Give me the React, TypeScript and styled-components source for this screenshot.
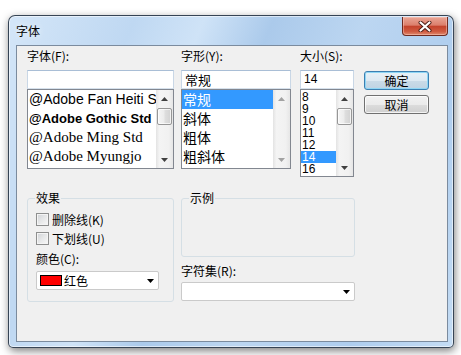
import React from "react";
import styled, { createGlobalStyle, css } from "styled-components";

const GlobalStyle = createGlobalStyle`
  html, body {
    margin: 0;
    padding: 0;
    background: #ffffff;
  }
  body {
    font-family: "Noto Sans CJK SC", "Liberation Sans", sans-serif;
    font-size: 12px;
    color: #000000;
  }
  * {
    box-sizing: border-box;
  }
`;

const Page = styled.div`
  width: 461px;
  height: 355px;
  padding: 15px 0 0 8px;
`;

const Window = styled.div`
  width: 446px;
  height: 333px;
  display: flex;
  flex-direction: column;
  border: 1px solid rgba(40, 52, 68, 0.9);
  border-radius: 7px 7px 5px 5px;
  padding: 0 5px 5px 7px;
  background: linear-gradient(
    112deg,
    #d4e6f8 0%,
    #bfd8f2 22%,
    #cfe3f7 34%,
    #abcaeb 46%,
    #bcd6f1 62%,
    #aecdee 82%,
    #c4dcf4 100%
  );
  box-shadow: inset 0 0 0 1px rgba(255, 255, 255, 0.55),
    1px 3px 9px rgba(0, 0, 0, 0.5);
`;

const TitleBar = styled.div`
  height: 29px;
  flex: none;
  display: flex;
  justify-content: space-between;
  align-items: flex-start;
`;

const Title = styled.div`
  line-height: 29px;
  font-size: 12px;
  text-shadow: 0 0 6px rgba(255, 255, 255, 0.9);
`;

const CloseButton = styled.div`
  width: 46px;
  height: 19px;
  margin-top: 1px;
  display: flex;
  align-items: center;
  justify-content: center;
  border: 1px solid #6e2a20;
  border-top: none;
  border-radius: 0 0 4px 4px;
  background: linear-gradient(
    #e9a696 0%,
    #dc7f6c 45%,
    #c4432c 52%,
    #cf5a40 80%,
    #df8a6e 100%
  );
  box-shadow: inset 0 0 0 1px rgba(255, 210, 200, 0.45);
`;

const Client = styled.div`
  flex: 1;
  background: #f0f0f0;
  border: 1px solid #7b8b9e;
  padding: 2px 0 0 10px;
`;

const Row = styled.div<{ $mt?: number }>`
  display: flex;
  align-items: flex-start;
  margin-top: ${(p) => p.$mt ?? 0}px;
`;

const Column = styled.div<{ $w: number; $ml?: number }>`
  display: flex;
  flex-direction: column;
  width: ${(p) => p.$w}px;
  margin-left: ${(p) => p.$ml ?? 0}px;
`;

const Label = styled.div<{ $mt?: number; $mb?: number }>`
  height: 16px;
  line-height: 16px;
  font-size: 12px;
  white-space: nowrap;
  margin-top: ${(p) => p.$mt ?? 0}px;
  margin-bottom: ${(p) => p.$mb ?? 6}px;
`;

const TextBox = styled.div<{ $latin?: boolean }>`
  height: 19px;
  border: 1px solid;
  border-color: #a9bed6 #c9d7e6 #d6e1ec #c9d7e6;
  background: #ffffff;
  padding: 0 3px;
  font-size: ${(p) => (p.$latin ? 12 : 13)}px;
  font-family: ${(p) =>
    p.$latin
      ? `"Liberation Sans", sans-serif`
      : `"Noto Sans CJK SC", sans-serif`};
  line-height: 17px;
  white-space: nowrap;
`;

const ListBox = styled.div<{ $h: number }>`
  height: ${(p) => p.$h}px;
  border: 1px solid #828790;
  background: #ffffff;
  display: flex;
  overflow: hidden;
`;

const Items = styled.div<{ $pt?: number }>`
  flex: 1;
  min-width: 0;
  overflow: hidden;
  padding-top: ${(p) => p.$pt ?? 0}px;
`;

type FontKind = "sans" | "sansBold" | "serif" | "cjk" | "digits";

const fontFor = (kind: FontKind) => {
  switch (kind) {
    case "sans":
      return css`
        font-family: "Liberation Sans", sans-serif;
        font-size: 14px;
      `;
    case "sansBold":
      return css`
        font-family: "Liberation Sans", sans-serif;
        font-size: 13px;
        font-weight: bold;
      `;
    case "serif":
      return css`
        font-family: "Liberation Serif", serif;
        font-size: 15px;
      `;
    case "cjk":
      return css`
        font-family: "Noto Sans CJK SC", sans-serif;
        font-size: 14px;
      `;
    default:
      return css`
        font-family: "Liberation Sans", sans-serif;
        font-size: 12px;
      `;
  }
};

const Item = styled.div<{ $h: number; $font: FontKind; $selected?: boolean }>`
  height: ${(p) => p.$h}px;
  line-height: ${(p) => p.$h}px;
  padding-left: 1px;
  white-space: nowrap;
  ${(p) => fontFor(p.$font)}
  ${(p) =>
    p.$selected &&
    css`
      background: #3399ff;
      color: #ffffff;
    `}
`;

const ScrollBar = styled.div`
  width: 17px;
  flex: none;
  display: flex;
  flex-direction: column;
  background: linear-gradient(
    to right,
    #e3e3e3 0%,
    #f4f4f4 20%,
    #f1f1f1 75%,
    #e6e6e6 100%
  );
`;

const ScrollButton = styled.div`
  height: 17px;
  flex: none;
  display: flex;
  align-items: center;
  justify-content: center;
`;

const Track = styled.div`
  flex: 1;
`;

const Thumb = styled.div`
  height: 17px;
  margin: 1px 1px 0 1px;
  border: 1px solid #979797;
  border-radius: 2px;
  background: linear-gradient(
    to right,
    #f6f6f6 0%,
    #ececec 45%,
    #dedede 55%,
    #d2d2d2 100%
  );
  box-shadow: inset 0 0 0 1px rgba(255, 255, 255, 0.7);
`;

const PushButton = styled.button<{ $default?: boolean; $mt: number }>`
  height: 19px;
  margin: ${(p) => p.$mt}px 0 0 0;
  padding: 0;
  border: 1px solid #707070;
  border-radius: 3px;
  font-family: "Noto Sans CJK SC", sans-serif;
  font-size: 12px;
  line-height: 17px;
  color: #000000;
  background: linear-gradient(#f2f2f2 0%, #ebebeb 50%, #dddddd 50%, #cfcfcf 100%);
  box-shadow: inset 0 0 0 1px rgba(255, 255, 255, 0.75);
  ${(p) =>
    p.$default &&
    css`
      border-color: #3c7fb1;
      background: linear-gradient(
        #e8f1f7 0%,
        #dde9f2 50%,
        #cadbe8 50%,
        #bfd3e3 100%
      );
      box-shadow: inset 0 0 0 1px #8fd6f5;
    `}
`;

const GroupBox = styled.fieldset<{ $h: number }>`
  height: ${(p) => p.$h}px;
  margin: 0;
  min-width: 0;
  border: 1px solid #d5dfe5;
  border-radius: 3px;
  padding: 8px 0 0 8px;
`;

const GroupTitle = styled.legend`
  padding: 0 1px;
  margin-left: -1px;
  font-size: 12px;
  line-height: 14px;
`;

const CheckRow = styled.div`
  display: flex;
  align-items: center;
  gap: 3px;
  height: 13px;
  margin-bottom: 6px;
  font-size: 12px;
  white-space: nowrap;
`;

const CheckBox = styled.span`
  width: 13px;
  height: 13px;
  flex: none;
  border: 1px solid #8e8f8f;
  background: linear-gradient(135deg, #cfd2d6 0%, #e6e7e8 50%, #f8f8f8 100%);
  box-shadow: inset 0 0 0 1px #f4f4f4;
`;

const ComboBox = styled.div<{ $w: number }>`
  width: ${(p) => p.$w}px;
  height: 19px;
  display: flex;
  align-items: center;
  border: 1px solid #cacaca;
  border-radius: 2px;
  background: #ffffff;
  padding: 0 4px 0 3px;
  font-size: 12px;
`;

const Swatch = styled.span<{ $color: string }>`
  width: 22px;
  height: 11px;
  flex: none;
  border: 1px solid #000000;
  background: ${(p) => p.$color};
  margin-right: 2px;
`;

const ComboText = styled.span`
  line-height: 17px;
`;

const DropArrow = styled.svg`
  margin-left: auto;
  flex: none;
`;

const Arrow = ({ up, disabled }: { up?: boolean; disabled?: boolean }) => (
  <svg width="7" height="4" viewBox="0 0 7 4">
    <path
      d={up ? "M0 4 L3.5 0 L7 4 Z" : "M0 0 L7 0 L3.5 4 Z"}
      fill={disabled ? "#a2a2a2" : "#404040"}
    />
  </svg>
);

const VScroll = ({ thumb, disabled }: { thumb?: boolean; disabled?: boolean }) => (
  <ScrollBar>
    <ScrollButton>
      <Arrow up disabled={disabled} />
    </ScrollButton>
    <Track>{thumb && <Thumb />}</Track>
    <ScrollButton>
      <Arrow disabled={disabled} />
    </ScrollButton>
  </ScrollBar>
);

const fonts: { name: string; font: FontKind }[] = [
  { name: "@Adobe Fan Heiti Std", font: "sans" },
  { name: "@Adobe Gothic Std", font: "sansBold" },
  { name: "@Adobe Ming Std", font: "serif" },
  { name: "@Adobe Myungjo", font: "serif" },
];

const styles = ["常规", "斜体", "粗体", "粗斜体"];
const sizes = ["8", "9", "10", "11", "12", "14", "16"];

export default function App() {
  return (
    <>
      <GlobalStyle />
      <Page>
        <Window>
          <TitleBar>
            <Title>字体</Title>
            <CloseButton>
              <svg width="14" height="11" viewBox="0 0 14 11">
                <path
                  d="M2.5 1.5 L11.5 9.5 M11.5 1.5 L2.5 9.5"
                  stroke="#4a1c14"
                  strokeWidth="4"
                  strokeLinecap="round"
                />
                <path
                  d="M2.5 1.5 L11.5 9.5 M11.5 1.5 L2.5 9.5"
                  stroke="#ffffff"
                  strokeWidth="2.2"
                  strokeLinecap="round"
                />
              </svg>
            </CloseButton>
          </TitleBar>
          <Client>
            <Row>
              <Column $w={147}>
                <Label>字体(F):</Label>
                <TextBox />
                <ListBox $h={80}>
                  <Items $pt={0}>
                    {fonts.map((f) => (
                      <Item key={f.name} $h={19} $font={f.font}>
                        {f.name}
                      </Item>
                    ))}
                  </Items>
                  <VScroll thumb />
                </ListBox>
              </Column>
              <Column $w={110} $ml={7}>
                <Label>字形(Y):</Label>
                <TextBox>常规</TextBox>
                <ListBox $h={80}>
                  <Items>
                    {styles.map((s, i) => (
                      <Item key={s} $h={19} $font="cjk" $selected={i === 0}>
                        {s}
                      </Item>
                    ))}
                  </Items>
                  <VScroll disabled />
                </ListBox>
              </Column>
              <Column $w={54} $ml={9}>
                <Label>大小(S):</Label>
                <TextBox $latin>14</TextBox>
                <ListBox $h={88}>
                  <Items $pt={1}>
                    {sizes.map((s) => (
                      <Item key={s} $h={12} $font="digits" $selected={s === "14"}>
                        {s}
                      </Item>
                    ))}
                  </Items>
                  <VScroll thumb />
                </ListBox>
              </Column>
              <Column $w={65} $ml={10}>
                <PushButton $default $mt={23}>
                  确定
                </PushButton>
                <PushButton $mt={5}>取消</PushButton>
              </Column>
            </Row>
            <Row $mt={14}>
              <Column $w={147}>
                <GroupBox $h={111}>
                  <GroupTitle>效果</GroupTitle>
                  <CheckRow>
                    <CheckBox />
                    删除线(K)
                  </CheckRow>
                  <CheckRow>
                    <CheckBox />
                    下划线(U)
                  </CheckRow>
                  <Label $mb={4}>颜色(C):</Label>
                  <ComboBox $w={123}>
                    <Swatch $color="#ff0000" />
                    <ComboText>红色</ComboText>
                    <DropArrow width="7" height="4" viewBox="0 0 7 4">
                      <path d="M0 0 L7 0 L3.5 4 Z" fill="#000000" />
                    </DropArrow>
                  </ComboBox>
                </GroupBox>
              </Column>
              <Column $w={174} $ml={7}>
                <GroupBox $h={66}>
                  <GroupTitle>示例</GroupTitle>
                </GroupBox>
                <Label $mt={6} $mb={3}>
                  字符集(R):
                </Label>
                <ComboBox $w={174}>
                  <DropArrow width="7" height="4" viewBox="0 0 7 4">
                    <path d="M0 0 L7 0 L3.5 4 Z" fill="#000000" />
                  </DropArrow>
                </ComboBox>
              </Column>
            </Row>
          </Client>
        </Window>
      </Page>
    </>
  );
}
